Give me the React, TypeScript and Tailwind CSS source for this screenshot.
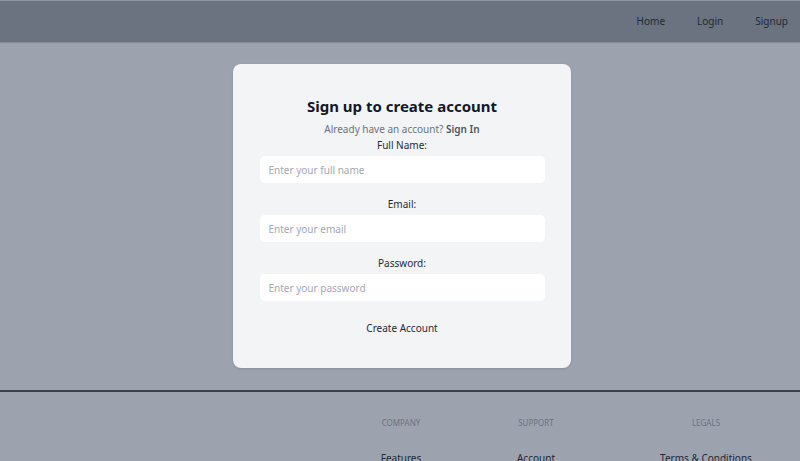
import React from "react";

const navLinks = ["Home", "Login", "Signup"];

const footerCols = [
  { title: "COMPANY", links: ["Features", "Pricing", "Affiliate Program"], width: "w-[100px]", gap: "" },
  { title: "SUPPORT", links: ["Account", "Help", "Contact Us"], width: "w-[100px]", gap: "ml-[35px]" },
  { title: "LEGALS", links: ["Terms & Conditions", "Privacy Policy", "Licensing"], width: "w-[140px]", gap: "ml-[50px]" },
];

function Field({ label, placeholder, type = "text", className = "" }: { label: string; placeholder: string; type?: string; className?: string }) {
  return (
    <div className={`flex flex-col items-center ${className}`}>
      <label className="text-[10px] leading-[15px] text-[#1f2937]">{label}</label>
      <input
        type={type}
        placeholder={placeholder}
        className="mt-[3px] h-[27px] w-[285px] rounded-[5px] bg-white px-[9px] text-[10px] text-[#1f2937] outline-none placeholder:text-[#a3a8b1]"
      />
    </div>
  );
}

export default function App() {
  return (
    <div className="min-h-screen bg-[#9ca3af] font-['Noto_Sans',sans-serif]">
      <header className="flex h-[42px] items-center justify-end gap-[32px] border-t border-[#8f959f] bg-[#6b7280] pr-[12px] shadow-[0_1px_1px_rgba(0,0,0,0.12)]">
        {navLinks.map((l) => (
          <a key={l} className="text-[10px] text-[#1f2937]">
            {l}
          </a>
        ))}
      </header>

      <main className="flex justify-center py-[22px] pl-[4px]">
        <div className="flex h-[304px] w-[338px] flex-col items-center rounded-[8px] bg-[#f3f4f6] pt-[30px] shadow-sm">
          <h1 className="text-[15px] leading-[24px] font-bold text-[#111827]">Sign up to create account</h1>
          <p className="mt-[4px] text-[10px] leading-[15px] text-[#6b7280]">
            Already have an account? <span className="font-semibold text-[#4b5563]">Sign In</span>
          </p>
          <Field label="Full Name:" placeholder="Enter your full name" className="mt-[1px]" />
          <Field label="Email:" placeholder="Enter your email" type="email" className="mt-[14px]" />
          <Field label="Password:" placeholder="Enter your password" type="password" className="mt-[14px]" />
          <button className="mt-[20px] text-[10px] leading-[15px] text-[#1f2937]">Create Account</button>
        </div>
      </main>

      <footer className="border-t-2 border-[#374151]">
        <div className="flex pl-[351px] pt-[25px]">
          {footerCols.map((c) => (
            <div key={c.title} className={`${c.width} ${c.gap} flex flex-col items-center`}>
              <h3 className="text-[8px] leading-[12px] text-[#6b7280] uppercase">{c.title}</h3>
              <ul className="mt-[22px] flex flex-col items-center gap-[12px]">
                {c.links.map((l) => (
                  <li key={l} className="text-[10px] leading-[15px] text-[#1f2937]">
                    {l}
                  </li>
                ))}
              </ul>
            </div>
          ))}
        </div>
      </footer>
    </div>
  );
}
